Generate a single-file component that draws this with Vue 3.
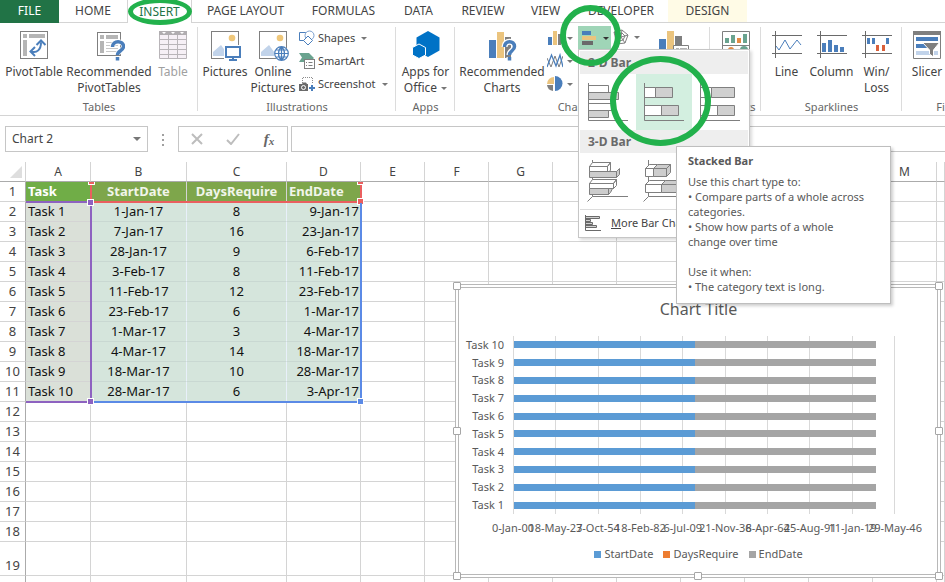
<template>
  <div class="excel">
    <nav class="tabs" aria-label="Ribbon tabs">
      <button
        v-for="tab in tabs"
        :key="tab.name"
        type="button"
        class="tab"
        :class="tab.kind"
        :style="{ width: tab.width + 'px' }"
      >
        {{ tab.name }}
        <span v-if="tab.kind === 'active'" class="ring ring-tab"></span>
      </button>
    </nav>

    <section class="ribbon">
      <div class="group tables">
        <div class="tools">
          <button type="button" class="big pivot">
            <svg width="32" height="32" viewBox="0 0 32 32">
              <rect x="2.5" y="2.5" width="27" height="27" fill="#fff" stroke="#7f7f7f" />
              <path d="M5 5h4v4H5zM11 5h16v4H11zM5 11h4v16H5z" fill="#b5b5b5" />
              <path d="M13 22.500c6 2 10-2 10-9M17 18l-4.500 4.500L17 27M18.500 16L23 11.500l4.500 4.500" fill="none" stroke="#4a7ebb" stroke-width="2" />
            </svg>
            <span>PivotTable</span>
          </button>
          <button type="button" class="big recommended">
            <svg width="32" height="32" viewBox="0 0 32 32">
              <rect x="4.500" y="3.500" width="23" height="23" fill="#fff" stroke="#7f7f7f" />
              <path d="M7 6h4v4H7zM13 6h12v4H13zM7 12h4v12H7z" fill="#b5b5b5" />
              <path d="M13 13.500h12M13 16.500h12M13 19.500h12M13 22.500h12" stroke="#c8c8c8" />
              <path d="M19.500 18c0-7 11-7 11-.5 0 4.500-6 4-6 8.500M24.500 28v3.500" fill="none" stroke="#fff" stroke-width="5" />
              <path d="M19.500 18c0-7 11-7 11-.5 0 4.500-6 4-6 8.500M24.500 28v3.500" fill="none" stroke="#4a7ebb" stroke-width="3.500" />
            </svg>
            <span>Recommended<br />PivotTables</span>
          </button>
          <button type="button" class="big table" disabled>
            <svg width="32" height="32" viewBox="0 0 32 32">
              <path d="M2.500 2.500h27v27h-27z" fill="#f6f0f6" stroke="#b9b5b9" />
              <path d="M2 2h28v4H2z" fill="#b0adb0" />
              <path d="M2 10.500h28M2 15.500h28M2 20.500h28M2 25.500h28M11.500 6v24M20.500 6v24" stroke="#b9b5b9" />
              <path d="M5 3h4l-2 2zM14 3h4l-2 2zM23 3h4l-2 2z" fill="#fff" />
            </svg>
            <span>Table</span>
          </button>
        </div>
        <div class="caption">Tables</div>
      </div>

      <div class="group illustrations">
        <div class="tools">
          <button type="button" class="big pictures">
            <svg width="32" height="32" viewBox="0 0 32 32">
              <rect x="2.500" y="2.500" width="27" height="27" fill="#fff" stroke="#7f7f7f" />
              <path d="M4 27v-4l8-7 8 11z" fill="#c1d3ea" />
              <circle cx="23" cy="9" r="3.300" fill="#efc77a" />
              <rect x="15" y="16" width="17" height="15" fill="#fff" />
              <path d="M17 18h14v10H17zM24 28v3M20 31h8" fill="#fff" stroke="#4a7ebb" stroke-width="2" />
            </svg>
            <span>Pictures</span>
          </button>
          <button type="button" class="big online">
            <svg width="32" height="32" viewBox="0 0 32 32">
              <rect x="2.500" y="2.500" width="27" height="27" fill="#fff" stroke="#7f7f7f" />
              <path d="M4 27v-4l8-7 8 11z" fill="#c1d3ea" />
              <circle cx="23" cy="9" r="3.300" fill="#efc77a" />
              <circle cx="24.500" cy="24.500" r="7.500" fill="#fff" />
              <path d="M17.700 24.500a6.800 6.800 0 1 0 13.600 0a6.800 6.800 0 1 0-13.600 0zM17.500 24.500h14M24.500 18v13M19 21h11M19 28h11M24.500 18c-4 3-4 10 0 13c4-3 4-10 0-13" fill="none" stroke="#4a7ebb" stroke-width="1.200" />
            </svg>
            <span>Online<br />Pictures</span>
          </button>
          <div class="small-list">
            <button type="button" class="small">
              <svg width="18" height="16" viewBox="0 0 18 16">
                <path d="M9 10.500H1.500v-8H9" fill="#fff" stroke="#4a7ebb" />
                <circle cx="11.500" cy="5.500" r="4.500" fill="#fff" stroke="#7ba0cf" />
                <path d="M10 6l4.500 4.500L10 15l-4.500-4.500z" fill="#fff" stroke="#4a7ebb" />
              </svg>
              Shapes<i class="caret"></i>
            </button>
            <button type="button" class="small">
              <svg width="18" height="16" viewBox="0 0 18 16">
                <path d="M1 0h10l5 5-4 4H1l3-4.500z" fill="#6aa38f" />
                <rect x="6.500" y="6.500" width="10" height="9" fill="#fff" stroke="#7f7f7f" />
                <path d="M8 9.500h1M10.500 9.500h4M8 12.500h1M10.500 12.500h4" stroke="#7f7f7f" />
              </svg>
              SmartArt
            </button>
            <button type="button" class="small">
              <svg width="18" height="16" viewBox="0 0 18 16">
                <path d="M4.500 7V1.500h10V8" fill="none" stroke="#8d8d8d" stroke-dasharray="1 1" />
                <path d="M1 8h3l1-1.500h3L9 8h1v7H1z" fill="#6a6a6a" />
                <circle cx="5.500" cy="11.500" r="2" fill="#6a6a6a" stroke="#fff" />
                <path d="M14 9v6M11 12h6" stroke="#4a7ebb" stroke-width="2" />
              </svg>
              Screenshot<i class="caret"></i>
            </button>
          </div>
        </div>
        <div class="caption">Illustrations</div>
      </div>

      <div class="group apps">
        <div class="tools">
          <button type="button" class="big">
            <svg width="32" height="32" viewBox="0 0 32 32">
              <path d="M18 2l11.500 6.500v13L18 28 6.500 21.500v-13z" fill="#0072c6" />
              <path d="M9 15l6.500 3.500v7.500L9 29.500 2.500 26v-7.500z" fill="#0072c6" stroke="#fff" />
            </svg>
            <span>Apps for<br />Office<i class="caret"></i></span>
          </button>
        </div>
        <div class="caption">Apps</div>
      </div>

      <div class="group charts">
        <div class="tools">
          <button type="button" class="big recommended">
            <svg width="32" height="32" viewBox="0 0 32 32">
              <path d="M3 11h7v18H3z" fill="#4a7ebb" />
              <path d="M11 3h7v26h-7z" fill="#ebc47e" />
              <path d="M19 8h6v21h-6z" fill="#7f7f7f" />
              <path d="M18.500 18c0-7 10-7 10-.5 0 4.500-5 4-5 8.500M23.500 28v3.500" fill="none" stroke="#fff" stroke-width="6" />
              <path d="M18.500 18c0-7 10-7 10-.5 0 4.500-5 4-5 8.500M23.500 28v3.500" fill="none" stroke="#4a7ebb" stroke-width="3.500" />
            </svg>
            <span>Recommended<br />Charts</span>
          </button>
          <div class="small-list chart-kinds">
            <button type="button" class="small" aria-label="Column chart">
              <svg width="16" height="16" viewBox="0 0 16 16">
                <path d="M1 7h4v8H1z" fill="#4a7ebb" />
                <path d="M6 1h4v14H6z" fill="#ebc47e" />
                <path d="M11 4h3v11h-3z" fill="#7f7f7f" />
              </svg>
              <i class="caret"></i>
            </button>
            <button type="button" class="small" aria-label="Line chart">
              <svg width="16" height="16" viewBox="0 0 16 16">
                <path d="M0 5l4 9 4-11 4 11 4-11" fill="none" stroke="#7f7f7f" />
                <path d="M0 14L4.500 2 9 13l4-11 3 12" fill="none" stroke="#4a7ebb" stroke-width="1.300" />
              </svg>
              <i class="caret"></i>
            </button>
            <button type="button" class="small" aria-label="Pie chart">
              <svg width="16" height="16" viewBox="0 0 16 16">
                <path d="M8 0a7.500 7.500 0 0 1 0 15V8z" fill="#4a7ebb" />
                <path d="M7 1v7H0a7 7 0 0 1 7-7z" fill="#ebc47e" />
                <path d="M0 9h6v6a7 7 0 0 1-6-6z" fill="#7f7f7f" />
              </svg>
              <i class="caret"></i>
            </button>
          </div>
          <div class="bar-picker">
            <button type="button" class="bar-button" aria-label="Bar chart">
              <svg width="16" height="16" viewBox="0 0 16 16">
                <path d="M1 1h9v4H1z" fill="#4a7ebb" />
                <path d="M1 6h14v4H1z" fill="#ebc47e" />
                <path d="M1 11h11v4H1z" fill="#6a6a6a" />
              </svg>
              <i class="caret dark"></i>
            </button>
            <span class="ring ring-button"></span>

            <div class="menu">
              <div class="menu-title">2-D Bar</div>
              <div class="menu-row">
                <button type="button" class="choice" aria-label="Clustered Bar">
                  <svg width="42" height="40" viewBox="0 0 42 40">
                    <g stroke="#7f7f7f">
                      <path d="M1.500 3.500h20v7h-20zM1.500 21.500h26v7h-26z" fill="#fff" />
                      <path d="M1.500 10.500h30v7h-30zM1.500 28.500h20v7h-20z" fill="#d0d0d0" />
                      <path d="M1.500 1v37.500H41" fill="none" />
                    </g>
                  </svg>
                </button>
                <button type="button" class="choice chosen" aria-label="Stacked Bar">
                  <svg width="42" height="40" viewBox="0 0 42 40">
                    <g stroke="#7f7f7f">
                      <path d="M1.500 5.500h11v10h-11zM1.500 23.500h17v10h-17z" fill="#fff" />
                      <path d="M12.500 5.500h17v10h-17zM18.500 23.500h17v10h-17z" fill="#d0d0d0" />
                      <path d="M1.500 1v37.500H41" fill="none" />
                    </g>
                  </svg>
                  <span class="ring ring-choice"></span>
                </button>
                <button type="button" class="choice" aria-label="100% Stacked Bar">
                  <svg width="42" height="40" viewBox="0 0 42 40">
                    <g stroke="#7f7f7f">
                      <path d="M1.500 5.500h11v10h-11zM1.500 23.500h17v10h-17z" fill="#fff" />
                      <path d="M12.500 5.500h23v10h-23zM18.500 23.500h17v10h-17z" fill="#d0d0d0" />
                      <path d="M1.500 1v37.500H41" fill="none" />
                    </g>
                  </svg>
                </button>
              </div>
              <div class="menu-title">3-D Bar</div>
              <div class="menu-row">
                <button type="button" class="choice" aria-label="3-D Clustered Bar">
                  <svg width="42" height="42" viewBox="0 0 42 42">
                    <g stroke="#7f7f7f">
                      <path d="M5.500 0v36.500H41M5.500 36.500l-5 5" fill="none" />
                      <path d="M2.500 6.500l3-4h18l-3 4zM2.500 6.500h18v6h-18zM2.500 23.500l3-4h24l-3 4zM2.500 23.500h24v5h-24zM20.500 6.500l3-4v8l-3 2zM26.500 23.500l3-4v6l-3 3z" fill="#fff" />
                      <path d="M2.500 11.500h27v6h-27zM29.500 11.500l3-3v6l-3 3zM2.500 28.500h19v6h-19zM21.500 28.500h4l-2 4-2 2z" fill="#cdcdcd" />
                    </g>
                  </svg>
                </button>
                <button type="button" class="choice" aria-label="3-D Stacked Bar">
                  <svg width="42" height="42" viewBox="0 0 42 42">
                    <g stroke="#7f7f7f">
                      <path d="M5.500 0v36.500H41M5.500 36.500l-5 5" fill="none" />
                      <path d="M2.500 8.500l4-4h8l-4 4zM2.500 8.500h8v8h-8zM2.500 24.500l4-4h16l-4 4zM2.500 24.500h16v8h-16z" fill="#fff" />
                      <path d="M10.500 8.500l4-4h13l-4 4zM10.500 8.500h13v8h-13zM23.500 8.500l4-4v8l-4 4zM18.500 24.500l4-4h15l-4 4zM18.500 24.500h15v8h-15z" fill="#cdcdcd" />
                    </g>
                  </svg>
                </button>
              </div>
              <button type="button" class="more">
                <svg width="18" height="16" viewBox="0 0 18 16">
                  <path d="M1.500 1.500h14v2h-14zM1.500 4.500h5v2h-5zM1.500 7.500h7v2h-7zM1.500 10.500h11v2h-11z" fill="#d0d0d0" stroke="#6a6a6a" />
                  <path d="M1.500 0v15.500H17" fill="none" stroke="#6a6a6a" />
                </svg>
                <span><u>M</u>ore Bar Charts...</span>
              </button>

              <div class="tooltip" role="tooltip">
                <strong>Stacked Bar</strong>
                <p>
                  Use this chart type to:<br />
                  • Compare parts of a whole across<br />
                  categories.<br />
                  • Show how parts of a whole<br />
                  change over time
                </p>
                <p>
                  Use it when:<br />
                  • The category text is long.
                </p>
              </div>
            </div>
          </div>
          <button type="button" class="small radar" aria-label="Radar chart">
            <svg width="18" height="16" viewBox="0 0 18 16">
              <path d="M2 3l8-2 6 5-3 8-8 1zM5 5l5-1 3 3-2 4-4 1zM9 8L2 3M9 8l1-7M9 8l7-2M9 8l4 6M9 8l-4 7" fill="none" stroke="#7f7f7f" />
            </svg>
            <i class="caret"></i>
          </button>
          <button type="button" class="big pivot-chart" aria-label="PivotChart">
            <svg width="32" height="32" viewBox="0 0 32 32">
              <path d="M1 10h7v20H1z" fill="#4a7ebb" />
              <path d="M9 2h7v28H9z" fill="#ebc47e" />
              <path d="M17 7h7v10h-7z" fill="#7f7f7f" />
              <path d="M15.500 16.500h15v14h-15z" fill="#fff" stroke="#7f7f7f" />
              <path d="M18 19h3v3h-3zM22 19h7v3h-7z" fill="#b5b5b5" />
            </svg>
          </button>
        </div>
        <div class="caption">Charts</div>
      </div>

      <div class="group reports">
        <div class="tools">
          <button type="button" class="big" aria-label="Power View">
            <svg width="32" height="32" viewBox="0 0 32 32">
              <path d="M2.500 2.500h27v27h-27zM2 16.500h28" fill="#fff" stroke="#7f7f7f" />
              <path d="M5 9h4v5H5zM11 6h4v8h-4zM23 5h4v9h-4z" fill="#6aa38f" />
              <path d="M17 9h4v5h-4z" fill="#e38b45" />
              <circle cx="11" cy="21" r="3" fill="#e38b45" />
              <circle cx="24" cy="21" r="4" fill="#6aa38f" />
            </svg>
          </button>
        </div>
        <div class="caption">Reports</div>
      </div>

      <div class="group sparklines">
        <div class="tools">
          <button type="button" class="big">
            <svg width="32" height="32" viewBox="0 0 32 32">
              <path d="M4.500 2v27M1 6.500h30M1 24.500h30" stroke="#6a6a6a" />
              <path d="M5 17l3 4 6-10 5 9 7-9 4 5" fill="none" stroke="#4a7ebb" />
            </svg>
            <span>Line</span>
          </button>
          <button type="button" class="big">
            <svg width="32" height="32" viewBox="0 0 32 32">
              <path d="M4.500 2v27M1 6.500h30M1 24.500h30" stroke="#6a6a6a" />
              <path d="M6 14h4v9H6zM12 11h4v12h-4zM18 16h4v7h-4zM24 18h4v5h-4z" fill="#4a7ebb" />
            </svg>
            <span>Column</span>
          </button>
          <button type="button" class="big">
            <svg width="32" height="32" viewBox="0 0 32 32">
              <path d="M4.500 2v27M1 6.500h30M1 24.500h30" stroke="#6a6a6a" />
              <path d="M6 9h3v6H6zM11 9h3v6h-3zM25 9h3v6h-3z" fill="#4a7ebb" />
              <path d="M15 16h3v6h-3zM21 16h3v6h-3z" fill="#d9603b" />
            </svg>
            <span>Win/<br />Loss</span>
          </button>
        </div>
        <div class="caption">Sparklines</div>
      </div>

      <div class="group filters">
        <div class="tools">
          <button type="button" class="big">
            <svg width="32" height="32" viewBox="0 0 32 32">
              <path d="M2.500 2.500h27v27h-27z" fill="#fff" stroke="#7f7f7f" />
              <path d="M2 2h28v4H2z" fill="#7f7f7f" />
              <path d="M5 8h22v4H5zM5 15h12v4H5z" fill="#4a7ebb" />
              <path d="M5 22h22v4H5z" fill="#c1d3ea" />
              <path d="M11.500 13.500h17l-6 7.500v7l-4-3v-4z" fill="#7f7f7f" stroke="#fff" />
            </svg>
            <span>Slicer</span>
          </button>
        </div>
        <div class="caption">Filters</div>
      </div>
    </section>

    <div class="formula-bar">
      <div class="name-box">
        <select aria-label="Name box">
          <option>Chart 2</option>
        </select>
        <i class="caret"></i>
      </div>
      <svg class="grip" width="3" height="12" viewBox="0 0 3 12">
        <path d="M0 0h2v2H0zM0 5h2v2H0zM0 10h2v2H0z" fill="#a0a0a0" />
      </svg>
      <div class="entry-buttons">
        <button type="button" aria-label="Cancel" disabled>
          <svg width="12" height="12" viewBox="0 0 12 12">
            <path d="M1 1l10 10M11 1L1 11" stroke="#bdbdbd" stroke-width="2" />
          </svg>
        </button>
        <button type="button" aria-label="Enter" disabled>
          <svg width="14" height="12" viewBox="0 0 14 12">
            <path d="M1 7l4 4 8-10" fill="none" stroke="#bdbdbd" stroke-width="2" />
          </svg>
        </button>
        <button type="button" class="fx" aria-label="Insert function">f<small>x</small></button>
      </div>
      <input class="formula" type="text" aria-label="Formula" />
    </div>

    <main class="sheet">
      <table>
        <colgroup>
          <col class="col-index" />
          <col class="col-a" />
          <col class="col-b" />
          <col class="col-c" />
          <col class="col-d" />
          <col v-for="name in plainColumns" :key="name" class="col-plain" />
          <col />
        </colgroup>
        <thead>
          <tr>
            <th class="corner"><i></i></th>
            <th v-for="name in ['A', 'B', 'C', 'D', ...plainColumns]" :key="name" scope="col">{{ name }}</th>
            <th></th>
          </tr>
        </thead>
        <tbody>
          <tr v-for="row in rows" :key="row.index" :class="row.kind">
            <th scope="row">{{ row.index }}</th>
            <td v-for="(cell, i) in row.cells" :key="i">{{ cell }}</td>
            <td v-for="name in plainColumns" :key="name"></td>
            <td></td>
          </tr>
        </tbody>
      </table>

      <span class="range range-header"><i></i><i></i><i></i></span>
      <span class="range range-values"><i></i></span>
      <span class="range range-tasks"><i></i><i></i></span>

      <figure class="chart">
        <span v-for="spot in handles" :key="spot" class="handle" :class="spot"></span>
        <figcaption>Chart Title</figcaption>
        <div class="plot">
          <div class="plot-labels">
            <span v-for="task in chartTasks" :key="task">{{ task }}</span>
          </div>
          <div class="plot-area">
            <div class="grid-lines"><i v-for="label in axis" :key="label"></i></div>
            <div v-for="task in chartTasks" :key="task" class="bar">
              <span class="start" :style="{ width: startShare + '%' }"></span>
              <span class="end" :style="{ width: endShare + '%' }"></span>
            </div>
          </div>
        </div>
        <div class="axis">
          <span v-for="label in axis" :key="label">{{ label }}</span>
        </div>
        <div class="legend">
          <span><i class="start"></i>StartDate</span>
          <span><i class="days"></i>DaysRequire</span>
          <span><i class="end"></i>EndDate</span>
        </div>
      </figure>
    </main>
  </div>
</template>

<script setup>
const tabs = [
  { name: 'FILE', width: 59, kind: 'file' },
  { name: 'HOME', width: 68 },
  { name: 'INSERT', width: 65, kind: 'active' },
  { name: 'PAGE LAYOUT', width: 107 },
  { name: 'FORMULAS', width: 89 },
  { name: 'DATA', width: 61 },
  { name: 'REVIEW', width: 68 },
  { name: 'VIEW', width: 57 },
  { name: 'DEVELOPER', width: 94 },
  { name: 'DESIGN', width: 79, kind: 'context' },
]

const plainColumns = ['E', 'F', 'G', 'H', 'I', 'J', 'K', 'L', 'M']

const data = [
  ['Task', 'StartDate', 'DaysRequire', 'EndDate'],
  ['Task 1', '1-Jan-17', '8', '9-Jan-17'],
  ['Task 2', '7-Jan-17', '16', '23-Jan-17'],
  ['Task 3', '28-Jan-17', '9', '6-Feb-17'],
  ['Task 4', '3-Feb-17', '8', '11-Feb-17'],
  ['Task 5', '11-Feb-17', '12', '23-Feb-17'],
  ['Task 6', '23-Feb-17', '6', '1-Mar-17'],
  ['Task 7', '1-Mar-17', '3', '4-Mar-17'],
  ['Task 8', '4-Mar-17', '14', '18-Mar-17'],
  ['Task 9', '18-Mar-17', '10', '28-Mar-17'],
  ['Task 10', '28-Mar-17', '6', '3-Apr-17'],
]

const rowKind = index => {
  if (index === 1) return 'heading'
  if (index <= data.length) return 'filled'
  return index === 19 ? 'tall' : ''
}

const rows = Array.from({ length: 19 }, (_, i) => ({
  index: i + 1,
  kind: rowKind(i + 1),
  cells: data[i] || ['', '', '', ''],
}))
rows.push({ index: '', kind: '', cells: ['', '', '', ''] })

const chartTasks = data.slice(1).map(row => row[0]).reverse()
const axis = [
  '0-Jan-00', '18-May-27', '3-Oct-54', '18-Feb-82', '6-Jul-09',
  '21-Nov-36', '8-Apr-64', '25-Aug-91', '11-Jan-19', '29-May-46',
]
const handles = ['nw', 'n', 'ne', 'e', 'se', 's', 'sw', 'w']

// date serials against the axis maximum of 90000
const startShare = (42740 / 90000) * 100
const endShare = (42750 / 90000) * 100
</script>

<style>
body {
  overflow: hidden;
  background: #fff;
}
</style>

<style scoped>
.excel {
  display: flex;
  flex-direction: column;
  height: 100vh;
  overflow: hidden;
  color: #444;
  font-family: "Noto Sans", "Open Sans", sans-serif;
  font-size: 12px;
  line-height: 16px;
}

button {
  padding: 0;
  border: 0;
  background: none;
  color: inherit;
  font: inherit;
}

svg {
  display: block;
  flex: none;
}

.caret {
  display: inline-block;
  width: 0;
  margin-left: 4px;
  border: 3px solid transparent;
  border-top-color: #777;
  border-bottom: 0;
  vertical-align: middle;
}

.caret.dark {
  border-top-color: #333;
}

.ring {
  position: absolute;
  box-sizing: border-box;
  border: 6px solid #22b14c;
  border-radius: 50%;
  pointer-events: none;
}

.tabs {
  display: flex;
  flex: none;
  height: 23px;
  box-sizing: border-box;
  border-bottom: 1px solid #d4d4d4;
}

.tab {
  position: relative;
  flex: none;
  height: 22px;
  white-space: nowrap;
}

.tab.file {
  height: 23px;
  padding-bottom: 2px;
  background: #217346;
  color: #fff;
}

.tab.active {
  height: 23px;
  border: 1px solid #d4d4d4;
  border-width: 0 1px;
  background: #fff;
  color: #217346;
}

.tab.context {
  background: #fffbe6;
}

.ring-tab {
  inset: -2px -1px -2px 0;
  border-width: 5px;
}

.ribbon {
  display: flex;
  flex: none;
  height: 93px;
  box-sizing: border-box;
  border-bottom: 1px solid #d4d4d4;
}

.group {
  display: flex;
  flex: none;
  flex-direction: column;
  position: relative;
  box-sizing: border-box;
  padding-top: 6px;
}

.group::after {
  content: "";
  position: absolute;
  top: 4px;
  right: 0;
  bottom: 4px;
  border-right: 1px solid #dcdcdc;
}

.tables { width: 198px; }
.illustrations { width: 198px; }
.apps { width: 59px; }
.charts { width: 255px; }
.reports { width: 51px; }
.sparklines { width: 141px; }
.filters { width: 100px; }

.tools {
  display: flex;
  flex: 1;
  align-items: flex-start;
}

.caption {
  height: 16px;
  color: #666;
  font-size: 11px;
  text-align: center;
}

.charts .caption {
  padding-right: 16px;
}

.big {
  display: flex;
  flex: 1;
  flex-direction: column;
  align-items: center;
  gap: 3px;
  min-width: 0;
  white-space: nowrap;
}

.big:disabled {
  color: #a0a0a0;
}

.pivot { flex: 0 0 68px; }
.big.recommended { flex: 0 0 82px; }
.big.table { flex: 0 0 46px; }

.pictures { flex: 0 0 54px; }
.online { flex: 0 0 42px; }

.filters .big {
  flex: 0 0 50px;
}

.charts .tools {
  padding-left: 6px;
}

.sparklines .tools {
  padding: 0 3px;
}

.small-list {
  display: flex;
  flex-direction: column;
  align-items: flex-start;
  gap: 7px;
  margin-top: 1px;
  padding-left: 4px;
}

.small {
  display: flex;
  align-items: center;
  gap: 2px;
  font-size: 11px;
  white-space: nowrap;
}

.chart-kinds {
  padding-left: 4px;
}

.chart-kinds .small {
  gap: 0;
}

.bar-picker {
  position: relative;
  margin: -3px 0 0 5px;
}

.bar-button {
  display: flex;
  align-items: center;
  gap: 2px;
  width: 33px;
  height: 24px;
  padding-left: 3px;
  background: #9fd5b7;
}

.ring-button {
  z-index: 6;
  top: -21px;
  left: -18px;
  width: 61px;
  height: 61px;
}

.radar {
  gap: 0;
  margin-left: 1px;
}

.big.pivot-chart {
  flex: 0 0 32px;
  margin-left: 18px;
}

.menu {
  position: absolute;
  z-index: 5;
  top: 23px;
  left: 0;
  width: 168px;
  padding: 1px;
  border: 1px solid #c6c6c6;
  background: #fff;
  box-shadow: 2px 2px 3px rgba(0, 0, 0, 0.15);
}

.menu-title {
  height: 23px;
  padding-left: 8px;
  background: #eee;
  color: #6a6a6a;
  font-weight: 700;
  line-height: 23px;
}

.menu-row {
  display: flex;
  height: 56px;
}

.choice {
  display: flex;
  align-items: center;
  justify-content: center;
  position: relative;
  flex: 0 0 56px;
}

.choice.chosen {
  background: #d3efe0;
}

.ring-choice {
  z-index: 7;
  inset: -18px -19px -16px -26px;
}

.more {
  display: flex;
  align-items: center;
  gap: 9px;
  width: 100%;
  height: 27px;
  padding-left: 4px;
  border-top: 1px solid #dcdcdc;
  font-size: 11px;
  white-space: nowrap;
}

.tooltip {
  position: absolute;
  z-index: 8;
  top: 96px;
  left: 97px;
  width: 192px;
  padding: 6px 10px 9px 11px;
  border: 1px solid #bebebe;
  background: #fff;
  box-shadow: 2px 2px 3px rgba(0, 0, 0, 0.2);
  color: #595959;
  font-size: 11px;
  line-height: 15px;
  white-space: nowrap;
}

.tooltip p {
  margin: 6px 0 0;
}

.tooltip p + p {
  margin-top: 15px;
}

.formula-bar {
  display: flex;
  flex: none;
  height: 26px;
  padding: 10px 0;
}

.name-box {
  position: relative;
  width: 143px;
  margin-left: 5px;
}

.name-box .caret {
  position: absolute;
  top: 11px;
  right: 7px;
  border-width: 4px 4px 0;
}

.name-box select {
  width: 100%;
  height: 26px;
  padding: 0 6px;
  border: 1px solid #c6c6c6;
  border-radius: 0;
  appearance: none;
  background: #fff;
  color: #444;
  font: inherit;
}

.grip {
  margin: 8px 13px 0 14px;
}

.entry-buttons {
  display: flex;
  box-sizing: border-box;
  width: 110px;
  border: 1px solid #c6c6c6;
}

.entry-buttons button {
  display: flex;
  flex: 1;
  align-items: center;
  justify-content: center;
}

.entry-buttons .fx {
  color: #666;
  font: italic 700 15px "Liberation Serif", serif;
}

.fx small {
  padding-top: 3px;
  font-size: 11px;
}

.formula {
  flex: 1;
  box-sizing: border-box;
  min-width: 0;
  height: 26px;
  margin-left: 3px;
  border: 1px solid #c6c6c6;
  border-right: 0;
}

.sheet {
  position: relative;
  flex: 1;
}

table {
  width: 100%;
  border-collapse: separate;
  border-spacing: 0;
  table-layout: fixed;
}

.col-index { width: 26px; }
.col-a { width: 65px; }
.col-b { width: 96px; }
.col-c { width: 100px; }
.col-d { width: 74px; }
.col-plain { width: 64px; }

th,
td {
  box-sizing: border-box;
  height: 20px;
  padding: 0;
  border: 0 solid #d4d4d4;
  border-width: 0 1px 1px 0;
  font-weight: 400;
  line-height: 19px;
  white-space: nowrap;
}

thead th {
  border-bottom-color: #ababab;
}

tbody th {
  border-right-color: #ababab;
  font-size: 13px;
  vertical-align: bottom;
}

td {
  color: #111;
  font-size: 13px;
}

.corner i {
  display: block;
  width: 0;
  margin-left: 10px;
  border-bottom: 12px solid #dedede;
  border-left: 12px solid transparent;
}

.tall th {
  height: 34px;
}

.heading td:nth-child(-n + 5) {
  background: #7ea64b;
  color: #f1f5ea;
  font-weight: 700;
}

.heading td:nth-child(2) {
  background: #70ad47;
  color: #fff;
}

.filled td:nth-child(2) {
  background: #dae0d8;
}

.filled td:nth-child(n + 3):nth-child(-n + 5) {
  border-color: #e8f0fa;
  border-bottom-color: #c9d8d2;
  background: #d5e5dc;
}

td:nth-child(2),
td:nth-child(5) {
  padding-left: 2px;
}

td:nth-child(3),
td:nth-child(4) {
  text-align: center;
}

.filled td:nth-child(5) {
  padding-right: 1px;
  text-align: right;
}

/* coloured outlines of the ranges that feed the chart */
.range {
  position: absolute;
  box-sizing: border-box;
  border: 0 solid;
}

.range i {
  position: absolute;
  right: -4px;
  bottom: -4px;
  width: 5px;
  height: 5px;
  border: 1px solid #fff;
  background: currentColor;
}

.range-header {
  top: 20px;
  left: 90px;
  width: 272px;
  height: 21px;
  border-width: 0 2px 2px;
  color: #ea5f5f;
}

.range-header i + i {
  top: 0;
  height: 2px;
  border-top: 0;
}

.range-header i + i + i {
  right: auto;
  left: -4px;
}

.range-values {
  top: 41px;
  left: 92px;
  width: 270px;
  height: 200px;
  border-width: 0 2px 2px 0;
  color: #5b8ae6;
}

.range-tasks {
  top: 39px;
  left: 26px;
  width: 66px;
  height: 202px;
  border-width: 2px 2px 2px 0;
  color: #8d62c0;
}

.range-tasks i + i {
  top: -4px;
}

.chart {
  position: absolute;
  top: 122px;
  left: 455px;
  box-sizing: border-box;
  width: 486px;
  margin: 0;
  padding: 9px 6px 12px 7px;
  border: 4px double #b8b8b8;
  background: #fff;
  color: #595959;
}

.handle {
  position: absolute;
  box-sizing: border-box;
  width: 8px;
  height: 8px;
  border: 1px solid #a6a6a6;
  border-radius: 1px;
  background: #fff;
}

.nw, .n, .ne { top: -6px; }
.sw, .s, .se { bottom: -6px; }
.nw, .w, .sw { left: -6px; }
.ne, .e, .se { right: -6px; }
.n, .s { left: calc(50% - 4px); }
.e, .w { top: calc(50% - 4px); }

figcaption {
  font-size: 16px;
  line-height: 24px;
  text-align: center;
}

.plot {
  display: flex;
  margin-top: 15px;
}

.plot-labels,
.plot-area {
  display: flex;
  flex-direction: column;
  justify-content: space-around;
  height: 178px;
}

.plot-labels {
  width: 38px;
  font-size: 11px;
  text-align: right;
  white-space: nowrap;
}

.plot-area {
  position: relative;
  flex: 1;
  margin: 0 36px 0 9px;
}

.grid-lines {
  display: flex;
  justify-content: space-between;
  position: absolute;
  inset: 0;
}

.grid-lines i {
  width: 1px;
  background: #d9d9d9;
}

.bar {
  display: flex;
  position: relative;
  height: 7px;
  margin-left: 1px;
}

.start { background: #5b9bd5; }
.days { background: #ed7d31; }
.end { background: #a5a5a5; }

.axis {
  display: flex;
  justify-content: space-between;
  margin: 6px 36px 0 47px;
  font-size: 11px;
}

.axis span {
  display: flex;
  justify-content: center;
  width: 0;
  white-space: nowrap;
}

.legend {
  display: flex;
  justify-content: center;
  gap: 10px;
  margin-top: 10px;
  font-size: 11px;
}

.legend span {
  display: flex;
  align-items: center;
  gap: 3px;
}

.legend i {
  width: 7px;
  height: 7px;
}
</style>
